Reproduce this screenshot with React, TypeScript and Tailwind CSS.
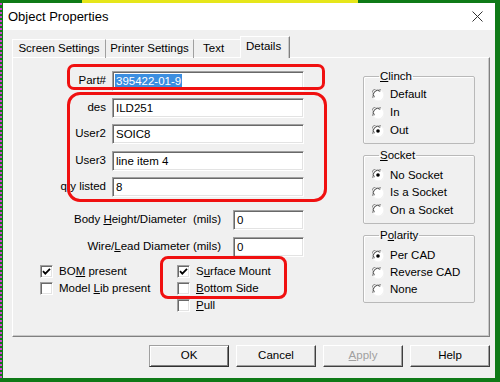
import React from "react";

const U = ({ c }: { c: string }) => <span className="underline decoration-1 underline-offset-[1px]">{c}</span>;

function Field({ value, w, selected }: { value: string; w: string; selected?: boolean }) {
  return (
    <div
      className={`h-[20px] ${w} bg-white border border-t-[#a0a0a0] border-l-[#a0a0a0] border-r-[#ffffff] border-b-[#ffffff] shadow-[inset_1px_1px_0_#696969,inset_-1px_-1px_0_#e3e3e3] flex items-center pl-[2px]`}
    >
      {selected ? (
        <span className="bg-[#3b8ee0] text-white px-[1px] leading-[14px]">{value}</span>
      ) : (
        <span className="px-[1px] leading-[14px]">{value}</span>
      )}
    </div>
  );
}

function Check({ checked, children }: { checked?: boolean; children: React.ReactNode }) {
  return (
    <div className="h-[17px] flex items-center gap-[6px]">
      <div className="w-[13px] h-[13px] bg-white border border-t-[#a0a0a0] border-l-[#a0a0a0] border-r-[#ffffff] border-b-[#ffffff] shadow-[inset_1px_1px_0_#696969,inset_-1px_-1px_0_#e3e3e3] flex items-center justify-center">
        {checked && (
          <svg width="9" height="9" viewBox="0 0 9 9">
            <path d="M1 4.2 L3.3 6.6 L8 1.8" fill="none" stroke="#000" strokeWidth="1.8" />
          </svg>
        )}
      </div>
      <span>{children}</span>
    </div>
  );
}

function Radio({ checked, children, h }: { checked?: boolean; children: React.ReactNode; h: string }) {
  return (
    <div className={`${h} flex items-center gap-[6px]`}>
      <svg width="12" height="12" viewBox="0 0 12 12">
        <circle cx="6" cy="6" r="5.5" fill="#ffffff" />
        <path d="M1.2 9 A5.2 5.2 0 0 1 9 1.2" fill="none" stroke="#7a7a7a" strokeWidth="1" />
        <path d="M2.3 8.2 A4.2 4.2 0 0 1 8.2 2.3" fill="none" stroke="#404040" strokeWidth="1" />
        <path d="M10.8 3 A5.2 5.2 0 0 1 3 10.8" fill="none" stroke="#f4f4f4" strokeWidth="1" />
        {checked && <circle cx="6" cy="6" r="1.8" fill="#000" />}
      </svg>
      <span>{children}</span>
    </div>
  );
}

function Group({ legend, children, pad }: { legend: React.ReactNode; children: React.ReactNode; pad: string }) {
  return (
    <fieldset className={`border border-[#b9b9b9] rounded-[2px] shadow-[inset_1px_1px_0_#ffffff] pl-[8px] ${pad}`}>
      <legend className="ml-[7px] px-[1px] leading-[14px]">{legend}</legend>
      {children}
    </fieldset>
  );
}

function Btn({ children, def, disabled }: { children: React.ReactNode; def?: boolean; disabled?: boolean }) {
  return (
    <div
      className={`w-[80px] h-[22px] flex items-center justify-center border ${
        def
          ? "border-t-[#a0a0a0] border-l-[#a0a0a0] border-r-[#303030] border-b-[#303030] shadow-[inset_1px_1px_0_#ffffff,inset_-1px_-1px_0_#808080]"
          : "border-t-[#ffffff] border-l-[#ffffff] border-r-[#404040] border-b-[#404040] shadow-[inset_-1px_-1px_0_#a0a0a0]"
      } ${disabled ? "text-[#a0a0a0]" : "text-black"}`}
    >
      {children}
    </div>
  );
}

export default function App() {
  return (
    <div className="w-[500px] h-[382px] bg-[#0f7a17] flex flex-col overflow-hidden font-['Liberation_Sans',Arial,sans-serif] text-[11.5px] text-black">
      <div className="h-[3px] flex">
        <div className="ml-[82px] w-[276px] h-[3px] bg-[#e6e61a]" />
      </div>
      <div className="flex h-[375px]">
        <div className="w-[3px] h-full border-l-2 border-dotted border-[#d040d0]" />
        <div className="w-[492px] h-full flex flex-col bg-[#f0f0f0]">
          {/* title bar */}
          <div className="h-[27px] bg-white flex items-center justify-between pl-[5px] pr-[12px]">
            <span className="text-[13px]">Object Properties</span>
            <svg width="11" height="11" viewBox="0 0 11 11">
              <path d="M0.5 0.5 L10.5 10.5 M10.5 0.5 L0.5 10.5" stroke="#333" strokeWidth="1" />
            </svg>
          </div>
          {/* body */}
          <div className="flex-1 flex flex-col pl-[9px] pr-[5px]">
            {/* tabs */}
            <div className="mt-[7px] h-[21px] flex items-end relative z-10 -mb-[1px]">
              <div className="w-[94px] h-[19px] border-t border-l border-t-white border-l-white border-r border-r-[#a0a0a0] flex items-center justify-center">
                Screen Settings
              </div>
              <div className="w-[88px] h-[19px] border-t border-t-white border-r border-r-[#a0a0a0] flex items-center justify-center">
                Printer Settings
              </div>
              <div className="w-[48px] h-[19px] border-t border-t-white flex items-center pl-[9px]">Text</div>
              <div className="-ml-[2px] w-[50px] h-[22px] bg-[#f0f0f0] border-t border-l border-t-white border-l-white border-r border-r-[#808080] shadow-[inset_-1px_0_0_#c8c8c8] flex items-center pl-[5px] pb-[2px]">
                Details
              </div>
            </div>
            {/* panel */}
            <div className="w-[478px] h-[280px] border border-t-white border-l-white border-r-[#808080] border-b-[#808080] shadow-[inset_-1px_-1px_0_#c8c8c8] flex relative">
              {/* left column */}
              <div className="w-[350px] flex flex-col pt-[13px]">
                <div className="flex flex-col gap-[6.5px]">
                  <div className="flex items-center gap-[6px]">
                    <div className="w-[93px] text-right">Part#</div>
                    <Field value="395422-01-9" w="w-[192px]" selected />
                  </div>
                  <div className="flex items-center gap-[6px]">
                    <div className="w-[93px] text-right">des</div>
                    <Field value="ILD251" w="w-[192px]" />
                  </div>
                  <div className="flex items-center gap-[6px]">
                    <div className="w-[93px] text-right">User2</div>
                    <Field value="SOIC8" w="w-[192px]" />
                  </div>
                  <div className="flex items-center gap-[6px]">
                    <div className="w-[93px] text-right">User3</div>
                    <Field value="line item 4" w="w-[192px]" />
                  </div>
                  <div className="flex items-center gap-[6px]">
                    <div className="w-[93px] text-right">qty listed</div>
                    <Field value="8" w="w-[192px]" />
                  </div>
                  <div className="mt-[6.5px] flex items-center gap-[12px]">
                    <div className="w-[208px] text-right whitespace-pre">
                      Body <U c="H" />eight/Diameter  (mils)
                    </div>
                    <Field value="0" w="w-[71px]" />
                  </div>
                  <div className="flex items-center gap-[12px]">
                    <div className="w-[208px] text-right whitespace-pre">
                      Wire/<U c="L" />ead Diameter (mils)
                    </div>
                    <Field value="0" w="w-[71px]" />
                  </div>
                </div>
                <div className="mt-[6.5px] flex">
                  <div className="ml-[27px] w-[137px] flex flex-col">
                    <Check checked>
                      BO<U c="M" /> present
                    </Check>
                    <Check>
                      Model <U c="L" />ib present
                    </Check>
                  </div>
                  <div className="flex flex-col">
                    <Check checked>
                      S<U c="u" />rface Mount
                    </Check>
                    <Check>
                      <U c="B" />ottom Side
                    </Check>
                    <Check>
                      <U c="P" />ull
                    </Check>
                  </div>
                </div>
              </div>
              {/* right column */}
              <div className="w-[112px] flex flex-col pt-[11px] gap-[4px]">
                <Group legend={<><U c="C" />linch</>} pad="pt-[3px] pb-[3px]">
                  <Radio h="h-[18px]">Default</Radio>
                  <Radio h="h-[18px]">In</Radio>
                  <Radio h="h-[18px]" checked>Out</Radio>
                </Group>
                <Group legend={<><U c="S" />ocket</>} pad="pt-[4.5px] pb-[4px]">
                  <Radio h="h-[17.5px]" checked>No Socket</Radio>
                  <Radio h="h-[17.5px]">Is a Socket</Radio>
                  <Radio h="h-[17.5px]">On a Socket</Radio>
                </Group>
                <Group legend={<>P<U c="o" />larity</>} pad="pt-[5px] pb-[4px]">
                  <Radio h="h-[17px]" checked>Per CAD</Radio>
                  <Radio h="h-[17px]">Reverse CAD</Radio>
                  <Radio h="h-[17px]">None</Radio>
                </Group>
              </div>

              {/* red annotation boxes */}
              <div className="absolute left-[54px] top-[6px] w-[258px] h-[26px] border-[3px] border-[#f01010] rounded-[7px] pointer-events-none" />
              <div className="absolute left-[54px] top-[34px] w-[260px] h-[110px] border-[3px] border-[#f01010] rounded-[13px] pointer-events-none" />
              <div className="absolute left-[147px] top-[198px] w-[127px] h-[43px] border-[3px] border-[#f01010] rounded-[8px] pointer-events-none" />
            </div>
            {/* buttons */}
            <div className="mt-[8px] flex justify-end gap-[7px]">
              <Btn def>OK</Btn>
              <Btn>Cancel</Btn>
              <Btn disabled>
                <U c="A" />pply
              </Btn>
              <Btn>Help</Btn>
            </div>
          </div>
        </div>
        <div className="w-[5px]" />
      </div>
    </div>
  );
}
